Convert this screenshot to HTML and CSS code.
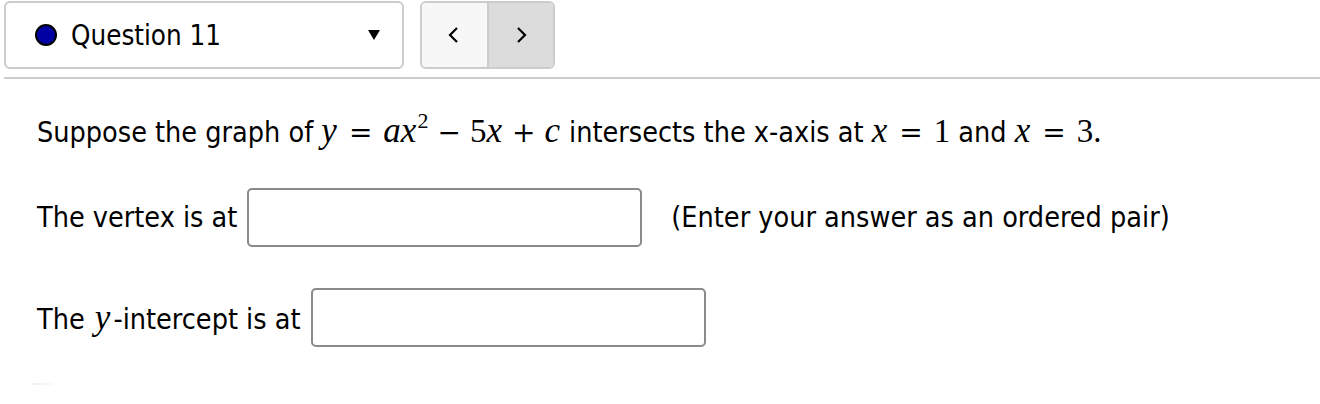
FILE: index.html
```html
<!DOCTYPE html>
<html>
<head>
<meta charset="utf-8">
<link rel="stylesheet" href="styles.css">
</head>
<body>
<div class="toolbar">
  <div class="qselect">
    <span class="dot"></span>
    <span class="qlabel">Question 11</span>
    <span class="caret"></span>
  </div>
  <div class="nav">
    <div class="navbtn prev"><svg width="14" height="18" viewBox="0 0 14 18"><path d="M10 2 L3 9 L10 16" fill="none" stroke="#000" stroke-width="2.2"/></svg></div>
    <div class="navbtn next"><svg width="14" height="18" viewBox="0 0 14 18"><path d="M4 2 L11 9 L4 16" fill="none" stroke="#000" stroke-width="2.2"/></svg></div>
  </div>
</div>
<div class="rule"></div>
<div class="content">
  <p class="line intro">Suppose the graph of <span class="m"><i>y</i><span class="rel">=</span><i>ax</i><sup>2</sup><span class="bin">−</span>5<i>x</i><span class="bin">+</span><i>c</i></span> intersects the x-axis at <span class="m"><i>x</i><span class="rel">=</span>1</span> and <span class="m"><i>x</i><span class="rel">=</span>3.</span></p>
  <div class="line row vertex">
    <span>The vertex is at</span>
    <span class="box"></span>
    <span class="hint">(Enter your answer as an ordered pair)</span>
  </div>
  <div class="line row yint">
    <span>The <span class="m var"><i>y</i></span>-intercept is at</span>
    <span class="box"></span>
  </div>
  <div class="fade"></div>
</div>
</body>
</html>
```

FILE: styles.css
```css
html, body {
  margin: 0;
  padding: 0;
  background: #fff;
}
body {
  font-family: "DejaVu Sans Condensed", "DejaVu Sans", sans-serif;
  color: #000;
  width: 1320px;
  height: 404px;
  overflow: hidden;
}
.toolbar {
  display: flex;
  gap: 16px;
  padding: 1px 0 0 4px;
}
.qselect {
  box-sizing: border-box;
  width: 400px;
  height: 68px;
  border: 2px solid #ccc;
  border-radius: 6px;
  display: flex;
  align-items: center;
  padding-left: 29px;
  padding-right: 22px;
}
.dot {
  box-sizing: border-box;
  width: 22px;
  height: 22px;
  border-radius: 50%;
  background: #0000a3;
  border: 2px solid #000;
  margin-right: 14px;
}
.qlabel {
  font-size: 27.5px;
  flex: 1;
}
.caret {
  width: 0;
  height: 0;
  border-left: 6px solid transparent;
  border-right: 6px solid transparent;
  border-top: 10px solid #000;
}
.nav {
  box-sizing: border-box;
  width: 135px;
  height: 68px;
  border: 2px solid #ccc;
  border-radius: 6px;
  display: flex;
  overflow: hidden;
}
.navbtn {
  flex: 1;
  display: flex;
  align-items: center;
  justify-content: center;
}
.prev {
  background: #f7f7f7;
  border-right: 2px solid #ccc;
}
.next {
  background: #dcdcdc;
}
.rule {
  height: 2px;
  background: #ccc;
  margin: 8px 0 0 4px;
}
.content {
  padding-left: 37px;
  font-size: 28.5px;
}
.line {
  margin: 0;
}
.intro {
  padding-top: 36px;
  line-height: 32px;
}
.m {
  font-family: "Liberation Serif", "DejaVu Serif", serif;
  font-size: 33px;
}
.m i {
  font-family: "Liberation Serif", serif;
  font-style: italic;
  font-size: 35px;
  padding-right: 1px;
}
.m .rel, .m .bin {
  font-family: "DejaVu Serif", serif;
  font-size: 28px;
}
.m .rel {
  margin: 0 11px;
}
.m .bin {
  margin: 0 9px;
}
.m sup {
  font-size: 22px;
  vertical-align: 14px;
  line-height: 0;
}
.var i {
  padding: 0 3px 0 2px;
}
.row {
  display: flex;
  align-items: center;
}
.vertex {
  margin-top: 39px;
}
.yint {
  margin-top: 41px;
}
.box {
  box-sizing: border-box;
  width: 395px;
  height: 59px;
  border: 2px solid #8a8a8a;
  border-radius: 5px;
  margin-left: 10px;
}
.hint {
  margin-left: 29px;
}
.fade {
  width: 20px;
  height: 2px;
  margin: 36px 0 0 -4px;
  background: linear-gradient(to right, #f0f0f0, #fafafa);
}
```
